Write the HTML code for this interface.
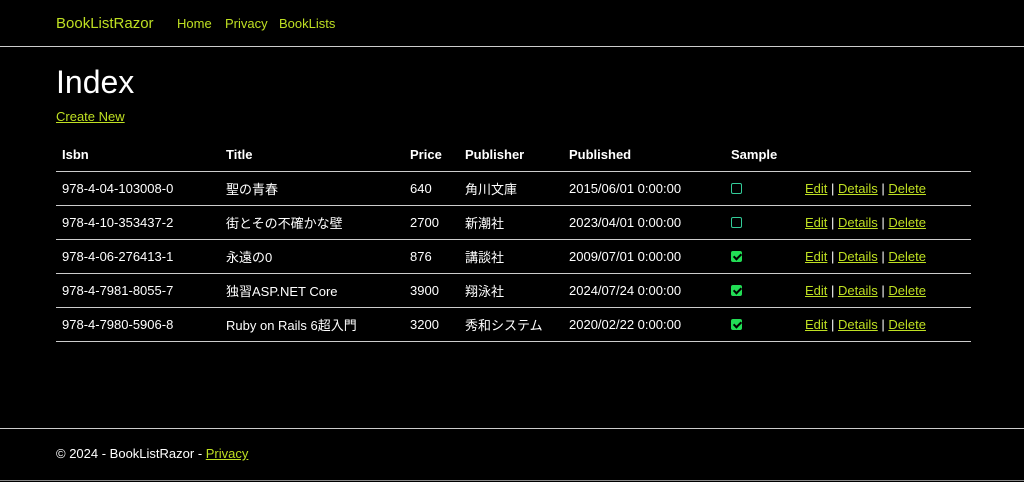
<!DOCTYPE html>
<html><head><meta charset="utf-8"><style>
body{margin:0;background:#000;color:#fff;font-family:"Liberation Sans","Noto Sans CJK JP",sans-serif;font-size:13px;width:1024px;height:482px;overflow:hidden;position:relative}
a{color:#bfe022}
.nav{position:absolute;top:0;left:0;right:0;height:46px;border-bottom:1px solid #ccc}
.brand{position:absolute;left:56px;top:15px;font-size:15px;color:#bfe022}
.nl{position:absolute;top:16px;font-size:13px;color:#bfe022}
h1{position:absolute;left:56px;top:64px;margin:0;font-size:32px;font-weight:normal}
.cn{position:absolute;left:56px;top:109px;font-size:13px}
table{position:absolute;left:56px;top:138px;width:915px;border-collapse:collapse}
th{text-align:left;font-weight:bold;height:33px;border-bottom:1px solid #ccc;padding:0 0 0 6px}
td{height:33px;border-bottom:1px solid #ccc;padding:0 0 0 6px}
.cb{display:block;box-sizing:border-box;width:11px;height:11px;border:1px solid #3c9;border-radius:2px;position:relative}
.ck{background:#2d5;border-color:#2d5}
.ck:after{content:"";position:absolute;left:3px;top:0px;width:3px;height:6px;border:solid #000;border-width:0 2px 2px 0;transform:rotate(45deg)}
.foot{position:absolute;left:0;right:0;top:428px;border-top:1px solid #ccc}
.ft{position:absolute;left:56px;top:446px}
.bot{position:absolute;left:0;right:0;top:480px;border-top:1px solid #888}
</style></head><body>
<div class="nav"><span class="brand">BookListRazor</span><span class="nl" style="left:177px">Home</span><span class="nl" style="left:225px">Privacy</span><span class="nl" style="left:279px">BookLists</span></div>
<h1>Index</h1>
<a class="cn" href="#">Create New</a>
<table>
<tr><th style="width:158px">Isbn</th><th style="width:178px">Title</th><th style="width:49px">Price</th><th style="width:98px">Publisher</th><th style="width:156px">Published</th><th style="width:68px">Sample</th><th></th></tr>
<tr><td>978-4-04-103008-0</td><td>聖の青春</td><td>640</td><td>角川文庫</td><td>2015/06/01 0:00:00</td><td><span class="cb"></span></td><td><a href="#">Edit</a> | <a href="#">Details</a> | <a href="#">Delete</a></td></tr>
<tr><td>978-4-10-353437-2</td><td>街とその不確かな壁</td><td>2700</td><td>新潮社</td><td>2023/04/01 0:00:00</td><td><span class="cb"></span></td><td><a href="#">Edit</a> | <a href="#">Details</a> | <a href="#">Delete</a></td></tr>
<tr><td>978-4-06-276413-1</td><td>永遠の0</td><td>876</td><td>講談社</td><td>2009/07/01 0:00:00</td><td><span class="cb ck"></span></td><td><a href="#">Edit</a> | <a href="#">Details</a> | <a href="#">Delete</a></td></tr>
<tr><td>978-4-7981-8055-7</td><td>独習ASP.NET Core</td><td>3900</td><td>翔泳社</td><td>2024/07/24 0:00:00</td><td><span class="cb ck"></span></td><td><a href="#">Edit</a> | <a href="#">Details</a> | <a href="#">Delete</a></td></tr>
<tr><td>978-4-7980-5906-8</td><td>Ruby on Rails 6超入門</td><td>3200</td><td>秀和システム</td><td>2020/02/22 0:00:00</td><td><span class="cb ck"></span></td><td><a href="#">Edit</a> | <a href="#">Details</a> | <a href="#">Delete</a></td></tr>
</table>
<div class="foot"></div>
<div class="ft">© 2024 - BookListRazor - <a href="#">Privacy</a></div>
<div class="bot"></div>
</body></html>
